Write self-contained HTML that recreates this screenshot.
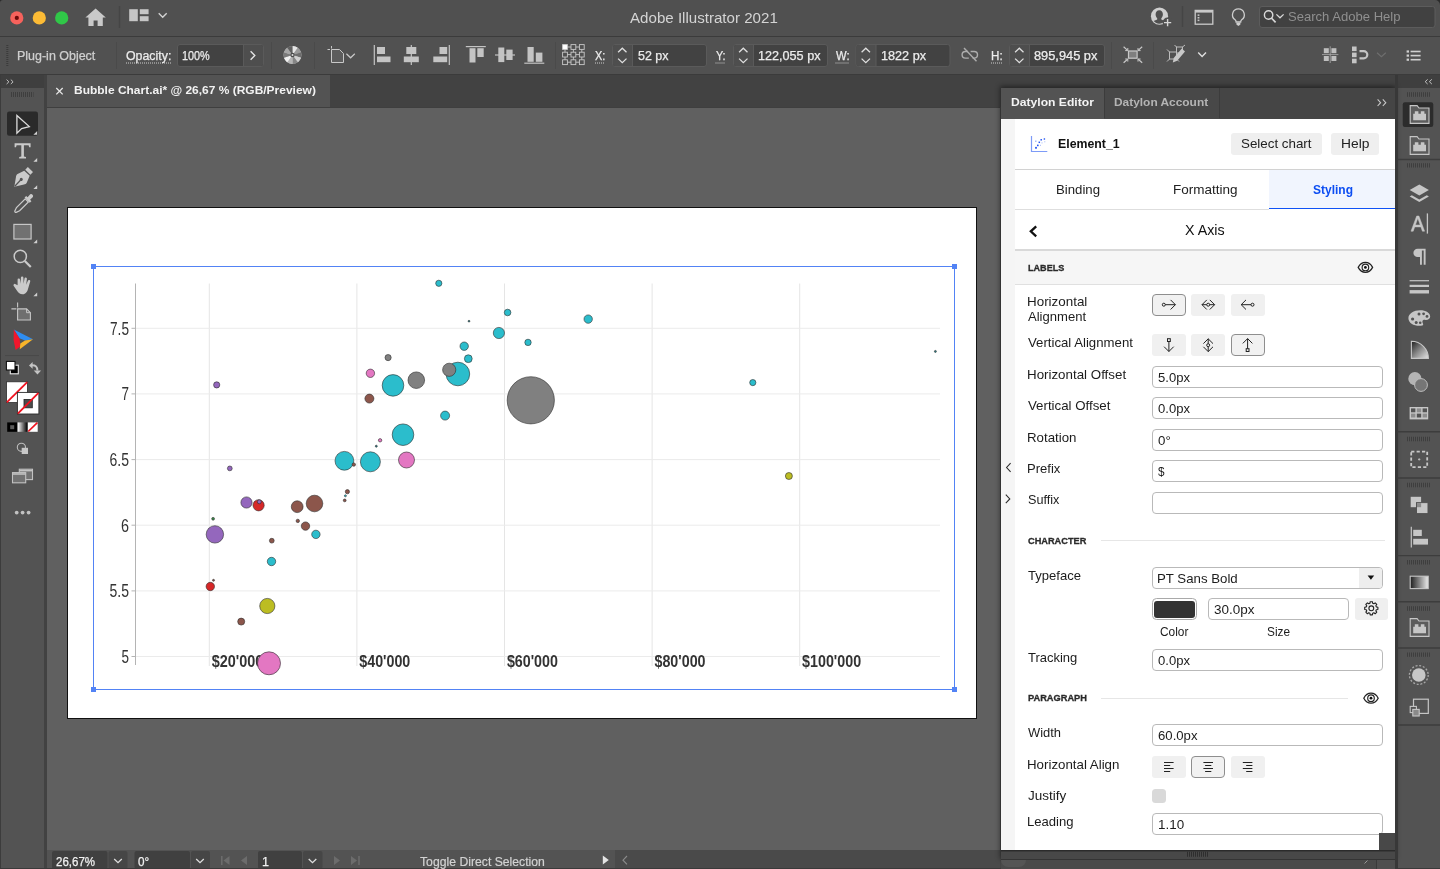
<!DOCTYPE html>
<html lang="en">
<head>
<meta charset="utf-8">
<title>Adobe Illustrator 2021</title>
<style>
*{box-sizing:border-box;margin:0;padding:0}
html,body{width:1440px;height:869px;overflow:hidden;background:#535353;font-family:"Liberation Sans",sans-serif;color:#ddd;font-size:12px}
.abs,.abs *{position:absolute}
.abs{left:0;top:0;width:1440px;height:869px;overflow:hidden;will-change:transform}
.t{white-space:nowrap;line-height:1;transform-origin:0 50%}
svg{overflow:visible}
/* ---------- app chrome ---------- */
#titlebar{left:0;top:0;width:1440px;height:36px;background:#505050}
#tl-sep{left:0;top:36px;width:1440px;height:1px;background:#3b3b3b}
#ctrlbar{left:0;top:37px;width:1440px;height:37px;background:#515151}
#cb-sep{left:0;top:74px;width:1440px;height:1px;background:#3b3b3b}
#tabbar{left:47px;top:75px;width:1349px;height:32px;background:#424242}
#doctab{left:47px;top:75px;width:283px;height:32px;background:#535353}
#tab-sep{left:47px;top:107px;width:953px;height:1px;background:#3f3f3f}
#canvas{left:47px;top:108px;width:953px;height:742px;background:#606060}
#lt-head{left:0;top:75px;width:44px;height:13px;background:#3f3f3f}
#lefttools{left:0;top:88px;width:44px;height:781px;background:#535353}
#lt-gap{left:44px;top:75px;width:3px;height:794px;background:#424242}
#statusbar{left:47px;top:850px;width:953px;height:19px;background:#535353}
#rightgap{left:1000px;top:107px;width:440px;height:762px;background:#454545}
#dock{left:1398px;top:88px;width:42px;height:781px;background:#535353}
#dock-head{left:1398px;top:75px;width:42px;height:13px;background:#3f3f3f}
/* inputs in control bar */
.cin{height:23px;top:44px;background:#404040;border:1px solid #383838;border-radius:2px}
.ctext{color:#e6e6e6;font-size:12.5px}
.vsep{width:1px;background:#474747}
/* artboard */
#artshadow{left:67px;top:207px;width:910px;height:512px;background:#111}
#artboard{left:68px;top:208px;width:908px;height:510px;background:#fff}
/* ---------- Datylon panel ---------- */
#pnl{left:1001px;top:88px;width:394px;height:771px;background:#3a3a3a;box-shadow:0 -1px 5px 1px rgba(0,0,0,.45)}
#pnl-tabs{left:1001px;top:88px;width:394px;height:30.600px;background:#454545}
#pnl-tab1{left:1001px;top:88px;width:103px;height:30.600px;background:#535353}
#pnl-tab2{left:1105px;top:88px;width:114px;height:30.600px;background:#484848}
#pnl-body{left:1001px;top:118.600px;width:394px;height:731.400px;background:#fff}
#pnl-gutter{left:1001px;top:118.600px;width:13.600px;height:731.400px;background:#f5f5f5}
.pl{color:#222;font-size:14px}
.pin{left:1152px;width:231px;height:22px;background:#fff;border:1px solid #b9b9b9;border-radius:4px}
.pbtn{width:34px;height:22px;background:#f0f0f0;border-radius:3px}
.pbtn.sel{border:1.200px solid #8e8e8e;background:#f1f1f1;border-radius:4px}
.gbtn{background:#efefef;border-radius:3px;height:22px}
#tt-title{left:630.0px !important;transform:scaleX(1.079)}
#tt-search{left:1288.0px !important;transform:scaleX(1.004)}
#c-plug{left:17.0px !important;transform:scaleX(1.039)}
#c-op{left:126.0px !important;transform:scaleX(1.030)}
#c-opv{left:182.0px !important;transform:scaleX(0.903)}
#c-x{left:595.0px !important;transform:scaleX(0.909)}
#c-xv{left:637.5px !important;transform:scaleX(1.039)}
#c-y{left:715.7px !important;transform:scaleX(0.899)}
#c-yv{left:758.0px !important;transform:scaleX(1.052)}
#c-w{left:835.5px !important;transform:scaleX(0.936)}
#c-wv{left:880.7px !important;transform:scaleX(1.054)}
#c-h{left:991.2px !important;transform:scaleX(0.969)}
#c-hv{left:1034.2px !important;transform:scaleX(1.066)}
#doc-title{left:74.0px !important;transform:scaleX(1.041)}
#st-zoom{left:55.5px !important;transform:scaleX(0.922)}
#st-rot{left:137.5px !important;transform:scaleX(0.937)}
#st-msg{left:420.0px !important;transform:scaleX(0.977)}
#p-tab1{left:1011.2px !important;transform:scaleX(1.055)}
#p-tab2{left:1114.0px !important;transform:scaleX(1.035)}
#p-el{left:1057.8px !important;transform:scaleX(0.948)}
#p-sel{left:1241.0px !important;transform:scaleX(1.027)}
#p-help{left:1340.8px !important;transform:scaleX(1.062)}
#p-bind{left:1055.9px !important;transform:scaleX(1.016)}
#p-fmt{left:1172.7px !important;transform:scaleX(1.038)}
#p-sty{left:1312.5px !important;transform:scaleX(0.922)}
#p-xaxis{left:1185.3px !important;transform:scaleX(0.952)}
#p-labels{left:1028.4px !important;transform:scaleX(0.956)}
#p-ha1{left:1027.4px !important;transform:scaleX(1.031)}
#p-ha2{left:1028.4px !important;transform:scaleX(1.005)}
#p-va{left:1028.4px !important;transform:scaleX(1.015)}
#p-ho{left:1027.4px !important;transform:scaleX(1.026)}
#p-vo{left:1028.4px !important;transform:scaleX(1.021)}
#p-rot{left:1027.4px !important;transform:scaleX(1.021)}
#p-pre{left:1027.4px !important;transform:scaleX(1.002)}
#p-suf{left:1028.4px !important;transform:scaleX(0.973)}
#p-char{left:1028.4px !important;transform:scaleX(0.970)}
#p-tf{left:1028.4px !important;transform:scaleX(1.005)}
#p-col{left:1160.0px !important;transform:scaleX(0.914)}
#p-size{left:1267.2px !important;transform:scaleX(0.910)}
#p-tr{left:1028.4px !important;transform:scaleX(0.999)}
#p-para{left:1028.4px !important;transform:scaleX(0.974)}
#p-w{left:1028.4px !important;transform:scaleX(0.994)}
#p-hal{left:1027.4px !important;transform:scaleX(1.023)}
#p-just{left:1028.4px !important;transform:scaleX(1.039)}
#p-lead{left:1027.4px !important;transform:scaleX(1.006)}
#v-ho{left:1157.8px !important;transform:scaleX(1.006)}
#v-vo{left:1157.8px !important;transform:scaleX(1.006)}
#v-rot{left:1157.8px !important;transform:scaleX(1.022)}
#v-pre{left:1157.8px !important;transform:scaleX(0.900)}
#v-tf{left:1156.8px !important;transform:scaleX(1.018)}
#v-size{left:1213.7px !important;transform:scaleX(1.037)}
#v-tr{left:1157.8px !important;transform:scaleX(1.006)}
#v-w{left:1157.8px !important;transform:scaleX(1.012)}
#v-lead{left:1157.8px !important;transform:scaleX(1.033)}
</style>
</head>
<body>
<div class="abs" id="root">

<!-- ===== base chrome ===== -->
<div id="titlebar"></div><div id="tl-sep"></div>
<div id="ctrlbar"></div><div id="cb-sep"></div>
<div id="rightgap"></div>
<div id="tabbar"></div><div id="doctab"></div><div id="tab-sep"></div>
<div id="canvas"></div>
<div id="lt-head"></div><div id="lefttools"></div><div id="lt-gap"></div>
<div id="statusbar"></div>
<div id="dock-head"></div><div id="dock"></div>

<!-- ===== artboard ===== -->
<div id="artshadow"></div><div id="artboard"></div>
<svg id="chart" style="left:0;top:0" width="1440" height="869" viewBox="0 0 1440 869">
<g stroke="#ebebeb" stroke-width="1" fill="none">
<path d="M209.3 283.5V666" stroke="#e5e5e5"/>
<path d="M356.9 283.5V666" stroke="#e5e5e5"/>
<path d="M504.5 283.5V666" stroke="#e5e5e5"/>
<path d="M652.1 283.5V666" stroke="#e5e5e5"/>
<path d="M799.7 283.5V666" stroke="#e5e5e5"/>
<path d="M135.5 328.3H940"/>
<path d="M135.5 393.9H940"/>
<path d="M135.5 459.6H940"/>
<path d="M135.5 525.2H940"/>
<path d="M135.5 590.9H940"/>
<path d="M135.5 656.5H940"/>
</g>
<g stroke="#b4b4b4" stroke-width="1" fill="none"><path d="M135.5 283.5V665"/>
<path d="M131.5 328.3H135.5"/>
<path d="M131.5 393.9H135.5"/>
<path d="M131.5 459.6H135.5"/>
<path d="M131.5 525.2H135.5"/>
<path d="M131.5 590.9H135.5"/>
<path d="M131.5 656.5H135.5"/>
</g>
<g font-family="Liberation Sans, sans-serif" font-size="16" font-weight="bold" fill="#333">
<text x="211.7" y="667.3" textLength="51.5" lengthAdjust="spacingAndGlyphs">$20'000</text>
<text x="359.3" y="667.3" textLength="51" lengthAdjust="spacingAndGlyphs">$40'000</text>
<text x="506.9" y="667.3" textLength="51" lengthAdjust="spacingAndGlyphs">$60'000</text>
<text x="654.5" y="667.3" textLength="51" lengthAdjust="spacingAndGlyphs">$80'000</text>
<text x="802.1" y="667.3" textLength="59" lengthAdjust="spacingAndGlyphs">$100'000</text>
</g>
<g stroke="#2e2e2e" stroke-width="0.6">
<circle cx="438.8" cy="283.3" r="3.1" fill="#2bbdcc"/>
<circle cx="507.6" cy="312.5" r="3.3" fill="#2bbdcc"/>
<circle cx="469.0" cy="321.2" r="0.9" fill="#2a7f88"/>
<circle cx="498.9" cy="333.0" r="5.6" fill="#2bbdcc"/>
<circle cx="528.0" cy="342.4" r="3.2" fill="#2bbdcc"/>
<circle cx="464.2" cy="346.2" r="4.2" fill="#2bbdcc"/>
<circle cx="468.3" cy="358.7" r="3.9" fill="#2bbdcc"/>
<circle cx="388.1" cy="357.6" r="3.1" fill="#808080"/>
<circle cx="370.4" cy="373.3" r="4.2" fill="#e377c2"/>
<circle cx="393.0" cy="385.4" r="10.8" fill="#2bbdcc"/>
<circle cx="416.3" cy="380.2" r="8.3" fill="#808080"/>
<circle cx="457.9" cy="374.0" r="11.8" fill="#2bbdcc"/>
<circle cx="449.2" cy="369.8" r="6.6" fill="#808080"/>
<circle cx="369.4" cy="398.6" r="4.5" fill="#8c564b"/>
<circle cx="530.8" cy="400.3" r="23.6" fill="#808080"/>
<circle cx="216.7" cy="384.9" r="3.1" fill="#9467bd"/>
<circle cx="445.1" cy="415.6" r="4.5" fill="#2bbdcc"/>
<circle cx="403.0" cy="434.7" r="10.8" fill="#2bbdcc"/>
<circle cx="380.1" cy="440.3" r="1.7" fill="#e377c2"/>
<circle cx="376.3" cy="446.2" r="1.0" fill="#2a7f88"/>
<circle cx="344.4" cy="460.8" r="9.4" fill="#2bbdcc"/>
<circle cx="353.8" cy="464.6" r="1.7" fill="#8c564b"/>
<circle cx="370.4" cy="461.8" r="10" fill="#2bbdcc"/>
<circle cx="406.5" cy="460.0" r="8" fill="#e377c2"/>
<circle cx="229.8" cy="468.4" r="2.4" fill="#9467bd"/>
<circle cx="347.4" cy="491.7" r="2.1" fill="#8c564b"/>
<circle cx="345.4" cy="495.8" r="1.0" fill="#2bbdcc"/>
<circle cx="344.7" cy="500.4" r="1.4" fill="#8c564b"/>
<circle cx="246.5" cy="502.5" r="5.6" fill="#9467bd"/>
<circle cx="258.6" cy="505.3" r="5.6" fill="#d62728"/>
<circle cx="259.3" cy="501.8" r="2.0" fill="#9467bd"/>
<circle cx="297.2" cy="506.7" r="5.9" fill="#8c564b"/>
<circle cx="314.5" cy="503.5" r="8.3" fill="#8c564b"/>
<circle cx="213.1" cy="518.8" r="1.4" fill="#3a8a4a"/>
<circle cx="297.8" cy="520.9" r="1.7" fill="#8c564b"/>
<circle cx="305.5" cy="526.1" r="4.2" fill="#8c564b"/>
<circle cx="214.9" cy="534.4" r="8.7" fill="#9467bd"/>
<circle cx="315.9" cy="534.4" r="4.2" fill="#2bbdcc"/>
<circle cx="271.8" cy="540.7" r="2.4" fill="#8c564b"/>
<circle cx="271.5" cy="561.5" r="4.2" fill="#2bbdcc"/>
<circle cx="213.5" cy="580.3" r="1.0" fill="#8c564b"/>
<circle cx="210.3" cy="586.5" r="4.2" fill="#d62728"/>
<circle cx="267.3" cy="606.0" r="7.6" fill="#bcbd22"/>
<circle cx="241.2" cy="621.6" r="3.5" fill="#8c564b"/>
<circle cx="269.0" cy="663.3" r="11.5" fill="#e377c2"/>
<circle cx="588.2" cy="319.1" r="4.2" fill="#2bbdcc"/>
<circle cx="752.8" cy="382.6" r="3.1" fill="#2bbdcc"/>
<circle cx="935.4" cy="351.4" r="1.0" fill="#2a7f88"/>
<circle cx="788.9" cy="476.0" r="3.5" fill="#bcbd22"/>
</g>
<g font-family="Liberation Sans, sans-serif" font-size="18" fill="#333" text-anchor="end">
<text x="129" y="334.5" textLength="19" lengthAdjust="spacingAndGlyphs">7.5</text>
<text x="129" y="400.1" textLength="7.5" lengthAdjust="spacingAndGlyphs">7</text>
<text x="129" y="465.8" textLength="19.5" lengthAdjust="spacingAndGlyphs">6.5</text>
<text x="129" y="531.5" textLength="8" lengthAdjust="spacingAndGlyphs">6</text>
<text x="129" y="597.1" textLength="19.5" lengthAdjust="spacingAndGlyphs">5.5</text>
<text x="129" y="662.8" textLength="7.5" lengthAdjust="spacingAndGlyphs">5</text>
</g>
<g fill="none" stroke="#5283f5" stroke-width="1"><rect x="93.5" y="266.5" width="861" height="423"/></g>
<g fill="#5283f5">
<rect x="91.0" y="264.0" width="5" height="5"/>
<rect x="952.0" y="264.0" width="5" height="5"/>
<rect x="91.0" y="687.0" width="5" height="5"/>
<rect x="952.0" y="687.0" width="5" height="5"/>
</g>
</svg>

<!-- ===== title bar ===== -->
<svg style="left:0;top:0" width="1440" height="37" viewBox="0 0 1440 37">
<circle cx="16.8" cy="17.9" r="6.6" fill="#f6625c"/><circle cx="16.8" cy="17.9" r="2.1" fill="#6b0a0a"/>
<circle cx="39.3" cy="17.9" r="6.6" fill="#fcbb35"/>
<circle cx="61.7" cy="17.9" r="6.6" fill="#30c748"/>
<!-- home -->
<path d="M95.6 8.4 L85.4 17.6 H88.4 V25.9 H93.6 V20.4 H97.6 V25.9 H102.8 V17.6 H105.8 Z" fill="#c9c9c9"/>
<path d="M119.5 6V28" stroke="#454545" stroke-width="1.4"/>
<!-- workspace layout -->
<g fill="#c6c6c6"><rect x="129.2" y="9.2" width="8.6" height="12"/><rect x="139.8" y="9.2" width="8.8" height="5"/><rect x="139.8" y="16.2" width="8.8" height="5"/></g>
<path d="M158.7 13.3 L162.7 17.2 L166.7 13.3" fill="none" stroke="#d2d2d2" stroke-width="1.4"/>
<!-- user+ -->
<circle cx="1159.5" cy="16.2" r="8.6" fill="#cfcfcf"/>
<path d="M1159.3 10.2c2.3 0 3.6 1.8 3.6 4.1 0 1.7-.7 3.2-1.6 3.9v1.2l3.4 1.7c-1.3 1.6-3.3 2.6-5.5 2.6s-4.2-1-5.5-2.6l3.5-1.7v-1.2c-.9-.7-1.6-2.2-1.6-3.9 0-2.3 1.4-4.1 3.7-4.1z" fill="#505050"/>
<circle cx="1167.6" cy="22.6" r="5" fill="#505050"/>
<path d="M1164 22.6h7.2M1167.6 19v7.2" stroke="#d6d6d6" stroke-width="1.4"/>
<path d="M1182.5 6V27" stroke="#454545" stroke-width="1.4"/>
<!-- panel icon -->
<rect x="1195.2" y="10.4" width="17.6" height="13.8" fill="none" stroke="#c9c9c9" stroke-width="1.3"/>
<rect x="1195.2" y="10.4" width="17.6" height="2.2" fill="#c9c9c9"/>
<g fill="#c9c9c9"><rect x="1197.6" y="14.4" width="1.8" height="1.5"/><rect x="1197.6" y="17" width="1.8" height="1.5"/><rect x="1197.6" y="19.6" width="1.8" height="1.5"/></g>
<!-- bulb -->
<path d="M1238.4 8.9a5.9 5.9 0 0 1 3.3 10.8c-.7.6-1 1.4-1 2.3h-4.6c0-.9-.3-1.7-1-2.3a5.9 5.9 0 0 1 3.3-10.8z" fill="none" stroke="#cdcdcd" stroke-width="1.3"/>
<path d="M1236.4 22.8h4v1.6l-2 1.5-2-1.5z" fill="#cdcdcd"/>
<!-- search -->
<rect x="1259.5" y="6.5" width="175.5" height="21" rx="2.5" fill="#414141" stroke="#5c5c5c" stroke-width="1"/>
<circle cx="1268.6" cy="15" r="4.2" fill="none" stroke="#d8d8d8" stroke-width="1.4"/>
<path d="M1271.6 18.2l4 4.2" stroke="#d8d8d8" stroke-width="1.6"/>
<path d="M1276.4 14.4l3.6 3.4 3.6-3.4" fill="none" stroke="#d8d8d8" stroke-width="1.3"/>
<!-- window corners -->
<path d="M0 0h3a3 3 0 0 0-3 3z" fill="#2b2b2b"/><path d="M1440 0h-5a5 5 0 0 1 5 5z" fill="#2b2b2b"/>
</svg>
<div class="t" id="tt-title" style="left:630px;top:11px;font-size:14px;color:#d4d4d4">Adobe Illustrator 2021</div>
<div class="t" id="tt-search" style="left:1288px;top:9.5px;font-size:13px;color:#8f8f8f">Search Adobe Help</div>


<!-- ===== control bar ===== -->
<svg style="left:0;top:37px" width="1440" height="38" viewBox="0 37 1440 38">
<path d="M7.300 45V67" stroke="#3b3b3b" stroke-width="2" stroke-dasharray="1 1"/>
<path d="M116.5 42V69" stroke="#4a4a4a" stroke-width="1"/>
<path d="M271.5 42V69" stroke="#4a4a4a" stroke-width="1"/>
<path d="M314.5 42V69" stroke="#4a4a4a" stroke-width="1"/>
<path d="M555.5 42V69" stroke="#4a4a4a" stroke-width="1"/>
<path d="M1111.5 42V69" stroke="#4a4a4a" stroke-width="1"/>
<path d="M1153.5 42V69" stroke="#4a4a4a" stroke-width="1"/>
<rect x="177.5" y="44.5" width="86" height="22" rx="2.5" fill="#424242" stroke="#5a5a5a" stroke-width="1"/>
<path d="M261 45H243.5V66H261a2 2 0 0 0 2-2V47a2 2 0 0 0-2-2z" fill="#4e4e4e"/>
<path d="M243.5 45V66" stroke="#5a5a5a" stroke-width="1"/>
<path d="M250.6 51.2l4.2 4.3-4.2 4.3" fill="none" stroke="#e4e4e4" stroke-width="1.4"/>
<rect x="612.5" y="44.5" width="94" height="22" rx="2.5" fill="#424242" stroke="#5a5a5a" stroke-width="1"/>
<path d="M615 45H632.5V66H615a2 2 0 0 1-2-2V47a2 2 0 0 1 2-2z" fill="#4e4e4e"/>
<path d="M632.5 45V66" stroke="#5a5a5a" stroke-width="1"/>
<path d="M618.0999999999999 52.2l4.2-4 4.2 4M618.0999999999999 58.6l4.2 4 4.2-4" fill="none" stroke="#e0e0e0" stroke-width="1.3"/>
<rect x="733.5" y="44.5" width="94" height="22" rx="2.5" fill="#424242" stroke="#5a5a5a" stroke-width="1"/>
<path d="M736 45H753.5V66H736a2 2 0 0 1-2-2V47a2 2 0 0 1 2-2z" fill="#4e4e4e"/>
<path d="M753.5 45V66" stroke="#5a5a5a" stroke-width="1"/>
<path d="M739.0999999999999 52.2l4.2-4 4.2 4M739.0999999999999 58.6l4.2 4 4.2-4" fill="none" stroke="#e0e0e0" stroke-width="1.3"/>
<rect x="856.0" y="44.5" width="94.0" height="22" rx="2.5" fill="#424242" stroke="#5a5a5a" stroke-width="1"/>
<path d="M858.5 45H876.0V66H858.5a2 2 0 0 1-2-2V47a2 2 0 0 1 2-2z" fill="#4e4e4e"/>
<path d="M876.0 45V66" stroke="#5a5a5a" stroke-width="1"/>
<path d="M861.5999999999999 52.2l4.2-4 4.2 4M861.5999999999999 58.6l4.2 4 4.2-4" fill="none" stroke="#e0e0e0" stroke-width="1.3"/>
<rect x="1009.5" y="44.5" width="95" height="22" rx="2.5" fill="#424242" stroke="#5a5a5a" stroke-width="1"/>
<path d="M1012 45H1029.5V66H1012a2 2 0 0 1-2-2V47a2 2 0 0 1 2-2z" fill="#4e4e4e"/>
<path d="M1029.5 45V66" stroke="#5a5a5a" stroke-width="1"/>
<path d="M1015.0999999999999 52.2l4.2-4 4.2 4M1015.0999999999999 58.6l4.2 4 4.2-4" fill="none" stroke="#e0e0e0" stroke-width="1.3"/>
<path d="M126 63H171" stroke="#cfcfcf" stroke-width="1" stroke-dasharray="1 1"/>
<path d="M595 63H605" stroke="#cfcfcf" stroke-width="1" stroke-dasharray="1 1"/>
<path d="M715.5 63H725" stroke="#cfcfcf" stroke-width="1" stroke-dasharray="1 1"/>
<path d="M835.5 63H849" stroke="#cfcfcf" stroke-width="1" stroke-dasharray="1 1"/>
<path d="M991 63H1002.5" stroke="#cfcfcf" stroke-width="1" stroke-dasharray="1 1"/>
<circle cx="292.5" cy="55" r="9" fill="#bdbdbd"/>
<path d="M292.5 55L292.50 46.00A9 9 0 0 1 297.79 47.72Z" fill="#e6e6e6"/>
<path d="M292.5 55L297.79 47.72A9 9 0 0 1 301.06 52.22Z" fill="#9a9a9a"/>
<path d="M292.5 55L301.06 52.22A9 9 0 0 1 301.06 57.78Z" fill="#6e6e6e"/>
<path d="M292.5 55L301.06 57.78A9 9 0 0 1 297.79 62.28Z" fill="#d0d0d0"/>
<path d="M292.5 55L297.79 62.28A9 9 0 0 1 292.50 64.00Z" fill="#858585"/>
<path d="M292.5 55L292.50 64.00A9 9 0 0 1 287.21 62.28Z" fill="#b5b5b5"/>
<path d="M292.5 55L287.21 62.28A9 9 0 0 1 283.94 57.78Z" fill="#f0f0f0"/>
<path d="M292.5 55L283.94 57.78A9 9 0 0 1 283.94 52.22Z" fill="#7a7a7a"/>
<path d="M292.5 55L283.94 52.22A9 9 0 0 1 287.21 47.72Z" fill="#a6a6a6"/>
<path d="M292.5 55L287.21 47.72A9 9 0 0 1 292.50 46.00Z" fill="#5f5f5f"/>
<circle cx="292.5" cy="55" r="2.2" fill="#4a4a4a"/><circle cx="292.5" cy="55" r="1" fill="#ddd"/>
<path d="M331.5 49.5H339.5L343.5 53.5V62.5H331.5Z" fill="#5c5c5c" stroke="#c8c8c8" stroke-width="1"/>
<path d="M327.5 49.5H330M331.5 46V48.5" stroke="#c8c8c8" stroke-width="1"/>
<path d="M346.4 53.8l4.2 4 4.2-4" fill="none" stroke="#c8c8c8" stroke-width="1.2"/>
<path d="M374.3 45V65" stroke="#c4c4c4" stroke-width="1.2"/><rect x="377" y="47" width="8" height="7" fill="#c4c4c4"/><rect x="377" y="56.5" width="13.5" height="5.7" fill="#c4c4c4"/>
<path d="M411.3 45V65" stroke="#c4c4c4" stroke-width="1.2"/><rect x="406.3" y="47" width="10" height="7" fill="#c4c4c4"/><rect x="403.8" y="56.5" width="15" height="5.7" fill="#c4c4c4"/>
<path d="M449.3 45V65" stroke="#c4c4c4" stroke-width="1.2"/><rect x="439.5" y="47" width="7.7" height="7" fill="#c4c4c4"/><rect x="433.3" y="56.5" width="13.9" height="5.7" fill="#c4c4c4"/>
<path d="M465.8 46.6H485.8" stroke="#c4c4c4" stroke-width="1.2"/><rect x="469.5" y="48.2" width="6" height="14.3" fill="#c4c4c4"/><rect x="477.3" y="48.2" width="6.4" height="8.8" fill="#c4c4c4"/>
<path d="M495 55H515" stroke="#c4c4c4" stroke-width="1.2"/><rect x="498.3" y="47.5" width="6" height="14.6" fill="#c4c4c4"/><rect x="506.3" y="49.6" width="6.3" height="10.4" fill="#c4c4c4"/>
<path d="M524.3 63.2H544.3" stroke="#c4c4c4" stroke-width="1.2"/><rect x="527.5" y="47" width="6.2" height="14.8" fill="#c4c4c4"/><rect x="535.8" y="52.6" width="6.6" height="9.2" fill="#c4c4c4"/>
<path d="M565 47H581.8M565 54.6H581.8M565 62.2H581.8M565 47V62.2M573.4 47V62.2M581.8 47V62.2" stroke="#c8c8c8" stroke-width="0.9" fill="none"/>
<rect x="562.6" y="44.6" width="4.8" height="4.8" fill="#fff" stroke="#c8c8c8" stroke-width="0.9"/>
<rect x="562.6" y="52.2" width="4.8" height="4.8" fill="#515151" stroke="#c8c8c8" stroke-width="0.9"/>
<rect x="562.6" y="59.800000000000004" width="4.8" height="4.8" fill="#515151" stroke="#c8c8c8" stroke-width="0.9"/>
<rect x="571.0" y="44.6" width="4.8" height="4.8" fill="#515151" stroke="#c8c8c8" stroke-width="0.9"/>
<rect x="571.0" y="52.2" width="4.8" height="4.8" fill="#515151" stroke="#c8c8c8" stroke-width="0.9"/>
<rect x="571.0" y="59.800000000000004" width="4.8" height="4.8" fill="#515151" stroke="#c8c8c8" stroke-width="0.9"/>
<rect x="579.4" y="44.6" width="4.8" height="4.8" fill="#515151" stroke="#c8c8c8" stroke-width="0.9"/>
<rect x="579.4" y="52.2" width="4.8" height="4.8" fill="#515151" stroke="#c8c8c8" stroke-width="0.9"/>
<rect x="579.4" y="59.800000000000004" width="4.8" height="4.8" fill="#515151" stroke="#c8c8c8" stroke-width="0.9"/>
<g fill="none" stroke="#adadad" stroke-width="1.4"><path d="M968 51.5h-2.6a3.3 3.3 0 0 0 0 6.6h3.4M970.6 51.5h3.6a3.3 3.3 0 0 1 0 6.6h-1.6"/><path d="M964 48l12.5 13.2"/></g>
<g stroke="#c8c8c8" stroke-width="1.2" fill="none"><rect x="1128.5" y="51" width="8.6" height="7.2" fill="#7f7f7f"/><path d="M1123.6 46.8l4 3.6M1142.2 46.8l-4 3.6M1123.6 62.8l4-3.6M1142.2 62.8l-4-3.6"/><path d="M1125.2 50.6h2.6v-2.6M1140.6 50.6h-2.6v-2.6M1125.2 59h2.6v2.6M1140.6 59h-2.6v2.6" stroke-width="1"/></g>
<g stroke="#bdbdbd" stroke-width="1" fill="none"><rect x="1169.5" y="52" width="7" height="7"/><rect x="1176.5" y="47" width="6" height="6"/><path d="M1167 49.5l2.5 2.5M1167 61.5l2.5-2.5M1179 61.5l-2.5-2.5M1174.5 45l2 2M1185 45l-2.5 2"/></g>
<path d="M1181.8 48.6l3.2 2.8-7.8 9.4-4.4 1.8.9-4.6z" fill="#c8c8c8"/>
<path d="M1198.2 52.6l3.9 3.8 3.9-3.8" fill="none" stroke="#e0e0e0" stroke-width="1.4"/>
<g fill="#bfbfbf"><rect x="1323.8" y="48.2" width="5" height="5"/><rect x="1331.4" y="48.2" width="5" height="5"/><rect x="1323.8" y="56" width="5" height="5"/><rect x="1331.4" y="56" width="5" height="5"/></g>
<path d="M1330.2 46.3V63M1322 54.6H1338.4" stroke="#a5a5a5" stroke-width="0.9"/>
<g fill="#c4c4c4"><rect x="1352" y="46.5" width="4.6" height="4.6"/><rect x="1352" y="52.6" width="4.6" height="4.6"/><rect x="1352" y="58.7" width="4.6" height="4.6"/></g>
<path d="M1359.5 51.2h4.2a3.6 3.6 0 0 1 0 7.2h-4.2" fill="none" stroke="#c4c4c4" stroke-width="2.2"/>
<path d="M1377 52.8l4.4 4 4.4-4" fill="none" stroke="#6e6e6e" stroke-width="1.2"/>
<g fill="#cfcfcf"><rect x="1406.6" y="50.4" width="2.4" height="2.2"/><rect x="1406.6" y="54.5" width="2.4" height="2.2"/><rect x="1406.6" y="58.6" width="2.4" height="2.2"/><rect x="1410.6" y="50.7" width="10" height="1.6"/><rect x="1410.6" y="54.8" width="10" height="1.6"/><rect x="1410.6" y="58.9" width="10" height="1.6"/></g>
</svg>
<div class="t" id="c-plug" style="left:17px;top:50px;font-size:12px;color:#cfcfcf;-webkit-text-stroke:0.25px #cfcfcf;">Plug-in Object</div>
<div class="t" id="c-op" style="left:126px;top:50px;font-size:12px;color:#ececec;-webkit-text-stroke:0.25px #ececec;">Opacity:</div>
<div class="t" id="c-opv" style="left:182px;top:50px;font-size:12px;color:#ececec;-webkit-text-stroke:0.25px #ececec;">100%</div>
<div class="t" id="c-x" style="left:595px;top:50px;font-size:12px;color:#ececec;-webkit-text-stroke:0.25px #ececec;">X:</div>
<div class="t" id="c-xv" style="left:637.5px;top:50px;font-size:12px;color:#ececec;-webkit-text-stroke:0.25px #ececec;">52 px</div>
<div class="t" id="c-y" style="left:715.5px;top:50px;font-size:12px;color:#ececec;-webkit-text-stroke:0.25px #ececec;">Y:</div>
<div class="t" id="c-yv" style="left:758px;top:50px;font-size:12px;color:#ececec;-webkit-text-stroke:0.25px #ececec;">122,055 px</div>
<div class="t" id="c-w" style="left:835.5px;top:50px;font-size:12px;color:#ececec;-webkit-text-stroke:0.25px #ececec;">W:</div>
<div class="t" id="c-wv" style="left:880.5px;top:50px;font-size:12px;color:#ececec;-webkit-text-stroke:0.25px #ececec;">1822 px</div>
<div class="t" id="c-h" style="left:991px;top:50px;font-size:12px;color:#ececec;-webkit-text-stroke:0.25px #ececec;">H:</div>
<div class="t" id="c-hv" style="left:1034.2px;top:50px;font-size:12px;color:#ececec;-webkit-text-stroke:0.25px #ececec;">895,945 px</div>

<!-- ===== doc tab + left tools ===== -->
<div style="left:0;top:75px;width:1px;height:794px;background:#3c3c3c"></div>
<svg style="left:0;top:75px" width="1000" height="794" viewBox="0 75 1000 794">
<!-- header chevrons + gripper -->
<path d="M6.6 79.6l2.3 2.2-2.3 2.2M10.8 79.6l2.3 2.2-2.3 2.2" fill="none" stroke="#c4c4c4" stroke-width="1"/>
<path d="M11 94.5H33.5" stroke="#3e3e3e" stroke-width="5" stroke-dasharray="1 1"/>
<!-- doc tab close + -->
<path d="M56.300 88l6.400 6.400M62.700 88l-6.400 6.400" stroke="#e8e8e8" stroke-width="1.3"/>
<!-- selection tool -->
<rect x="7" y="111.5" width="31" height="24.2" rx="2.2" fill="#2a2a2a"/>
<path d="M16.9 115.4V133.2L21.6 128.6L29.3 126.6Z" fill="none" stroke="#dcdcdc" stroke-width="1.3" stroke-linejoin="miter"/>
<g fill="#d0d0d0">
<path d="M37.200 131V134.800H33.400Z"/><path d="M37.200 158V161.800H33.400Z"/><path d="M37.200 185.200V189H33.400Z"/><path d="M37.200 239.400V243.200H33.400Z"/><path d="M37.200 292.400V296.200H33.400Z"/>
</g>
<!-- type tool -->
<path d="M14.6 143.3H30.6V147.2H29.2L28.6 145.3H23.9V156.5L26 157V158.5H19.2V157L21.3 156.5V145.3H16.6L16 147.2H14.6Z" fill="#cacaca"/>
<!-- pen tool -->
<g transform="translate(22.300 178.200) rotate(43) scale(1.1)">
<path d="M-3.2 -10.8h6.4v3.4h-6.4z" fill="#cacaca"/>
<path d="M-3.4 -6.2h6.8l2.3 6.4c.3 1-.1 2-.7 2.9L0 10.6l-5-7.5c-.6-.9-1-1.9-.7-2.9z" fill="#cacaca"/>
<path d="M0 10V2.2" stroke="#535353" stroke-width="1.1"/><circle cx="0" cy="1.4" r="1.4" fill="#535353"/>
</g>
<!-- eyedropper -->
<g transform="translate(22.200 205) rotate(45) scale(1.05)">
<path d="M-1.8 -12.6a1.9 1.9 0 0 1 3.6 0v3.8h1.8v2.2h-7v-2.2h1.8z" fill="#cacaca"/>
<path d="M-2.1 -6.2h4.2v11.8l-1.2 3.4a1 1 0 0 1-1.8 0l-1.2-3.4z" fill="none" stroke="#cacaca" stroke-width="1.2"/>
</g>
<!-- rectangle -->
<rect x="13.9" y="224.4" width="17.2" height="14.6" fill="#717171" stroke="#c6c6c6" stroke-width="1.2"/>
<!-- zoom -->
<circle cx="20.3" cy="256.4" r="6.1" fill="none" stroke="#cacaca" stroke-width="1.5"/>
<path d="M24.8 261l6 6" stroke="#cacaca" stroke-width="2.2"/>
<!-- hand -->
<path d="M17.6 285.2v-5.4a1.2 1.2 0 0 1 2.4-.2l.6 4.2.3-6a1.2 1.2 0 0 1 2.5 0l.2 6 .9-5.3a1.2 1.2 0 0 1 2.4.4l-.7 5.8 1.7-3.9a1.2 1.2 0 0 1 2.3.8l-2.200 7.400c-.7 2.500-2.200 5.300-5.400 5.300-2.800 0-4.100-1.300-5.400-3.200l-3.600-5.300a1.300 1.300 0 0 1 2-1.600z" fill="#cacaca"/>
<!-- artboard tool -->
<path d="M17.6 308.9H26.6L30.4 312.7V320H17.6Z" fill="#6f6f6f" stroke="#c6c6c6" stroke-width="1.1"/>
<path d="M26.6 308.9V312.7H30.4" fill="none" stroke="#c6c6c6" stroke-width="1"/>
<path d="M11.4 308.9H16.4M17.6 302.4V307.6" stroke="#c6c6c6" stroke-width="1.1"/>
<!-- datylon logo -->
<path d="M13.800 329.400L33 339.300L25 340.400L19.400 338.300Z" fill="#2f8df0"/>
<path d="M13.800 329.400L19.600 338.400L20.400 346.600L15.600 350L13.600 340Z" fill="#f0162c"/>
<path d="M33 339.300L19.800 349.200L20.300 343.600L25 340.400Z" fill="#f8b52a"/>
<path d="M5 355.6H39" stroke="#484848" stroke-width="1"/>
<!-- default fill/stroke -->
<rect x="10.300" y="365.200" width="8" height="8.600" fill="#000" stroke="#e8e8e8" stroke-width="1.1"/>
<rect x="12.600" y="367.600" width="3.400" height="3.800" fill="#000"/>
<rect x="6.400" y="361.400" width="8.600" height="8.600" fill="#fff" stroke="#111" stroke-width="1.1"/>
<!-- swap arrow -->
<path d="M31.400 365.200c4.200-.3 6 1.600 6 5.400" fill="none" stroke="#c4c4c4" stroke-width="2"/>
<path d="M29 365.400l3.600-3.300v6.600z" fill="#c4c4c4"/><path d="M37.500 374.400l-3.800-3.800h7.400z" fill="#c4c4c4"/>
<!-- fill -->
<rect x="6.500" y="381.800" width="21" height="20.800" fill="#fff" stroke="#2b2b2b" stroke-width="0.8"/>
<path d="M6.800 402.300L27.200 382.100" stroke="#f0121f" stroke-width="1.800"/>
<!-- stroke -->
<rect x="17.400" y="392.400" width="21.500" height="21.600" fill="#fff" stroke="#2b2b2b" stroke-width="0.9"/>
<rect x="24" y="399.400" width="8.300" height="8.400" fill="#4c4c4c" stroke="#222" stroke-width="0.8"/>
<path d="M17.800 413.600L38.500 392.800" stroke="#f0121f" stroke-width="1.800"/>
<!-- color modes -->
<defs><linearGradient id="gr1" x1="0" x2="1" y1="0" y2="0"><stop offset="0" stop-color="#fff"/><stop offset="1" stop-color="#000"/></linearGradient></defs>
<rect x="7.200" y="422.400" width="9.800" height="9.400" fill="#000"/><rect x="10.200" y="425.200" width="4" height="4" fill="#5a5a5a"/>
<rect x="17.700" y="422.400" width="9.600" height="9.400" fill="url(#gr1)"/>
<rect x="27.900" y="422.400" width="9.800" height="9.400" fill="#fff"/><path d="M28.200 431.500L37.400 422.700" stroke="#f0121f" stroke-width="1.700"/>
<!-- draw mode -->
<circle cx="21.400" cy="447.300" r="4.100" fill="none" stroke="#bdbdbd" stroke-width="1.100"/>
<rect x="21.700" y="447.800" width="6.300" height="6.200" fill="#c8c8c8"/>
<!-- screen mode -->
<rect x="19.300" y="469.200" width="13.200" height="10.400" fill="#727272" stroke="#c2c2c2" stroke-width="1.100"/><path d="M19.300 470.600H32.500" stroke="#c2c2c2" stroke-width="1.600"/>
<rect x="12.500" y="472.600" width="13.200" height="10.200" fill="#727272" stroke="#c2c2c2" stroke-width="1.100"/><path d="M12.500 474H25.700" stroke="#c2c2c2" stroke-width="1.600"/>
<!-- dots -->
<circle cx="16.700" cy="512.600" r="1.900" fill="#c2c2c2"/><circle cx="22.600" cy="512.600" r="1.900" fill="#c2c2c2"/><circle cx="28.600" cy="512.600" r="1.900" fill="#c2c2c2"/>
</svg>
<div class="t" id="doc-title" style="left:74px;top:84.500px;font-size:11.500px;font-weight:bold;color:#f2f2f2">Bubble Chart.ai* @ 26,67 % (RGB/Preview)</div>


<!-- ===== status bar ===== -->
<div style="left:615px;top:850px;width:385px;height:19px;background:#4a4a4a"></div>
<svg style="left:0;top:850px" width="1000" height="19" viewBox="0 850 1000 19">
<rect x="52" y="851" width="55.500" height="18" rx="2" fill="#404040"/><rect x="108.500" y="851" width="19" height="18" rx="2" fill="#464646"/>
<rect x="134.500" y="851" width="55.500" height="18" rx="2" fill="#404040"/><rect x="191" y="851" width="19" height="18" rx="2" fill="#464646"/>
<rect x="258" y="851" width="44" height="18" rx="2" fill="#404040"/><rect x="303" y="851" width="19.500" height="18" rx="2" fill="#464646"/>
<g fill="none" stroke="#dedede" stroke-width="1.300"><path d="M114.200 859l3.800 3.600 3.800-3.600"/><path d="M196.200 859l3.800 3.600 3.800-3.600"/><path d="M308.700 859l3.800 3.600 3.800-3.600"/></g>
<g fill="#6c6c6c"><path d="M221 856h1.600v9H221zM229.500 856v9l-6-4.500z"/><path d="M247 856v9l-6-4.500z"/><path d="M334 856v9l6-4.500z"/><path d="M351 856v9l6-4.500zM358.200 856h1.600v9h-1.600z"/></g>
<path d="M602.800 855.600v9l6-4.500z" fill="#e4e4e4"/>
<path d="M627 856l-4 4.200 4 4.200" fill="none" stroke="#8c8c8c" stroke-width="1.100"/>
<rect x="0" y="868" width="1440" height="1" fill="#3a3a3a"/>
</svg>
<div class="t" id="st-zoom" style="left:55.500px;top:856px;font-size:12.500px;color:#f0f0f0;-webkit-text-stroke:0.250px #f0f0f0">26,67%</div>
<div class="t" id="st-rot" style="left:137.500px;top:856px;font-size:12.500px;color:#f0f0f0;-webkit-text-stroke:0.250px #f0f0f0">0°</div>
<div class="t" id="st-page" style="left:262px;top:856px;font-size:12.500px;color:#f0f0f0;-webkit-text-stroke:0.250px #f0f0f0">1</div>
<div class="t" id="st-msg" style="left:420px;top:856px;font-size:12.500px;color:#d2d2d2;-webkit-text-stroke:0.200px #d2d2d2">Toggle Direct Selection</div>


<!-- ===== datylon panel ===== -->
<div id="pnl"></div><div id="pnl-tabs"></div><div id="pnl-tab1"></div><div id="pnl-tab2"></div><div id="pnl-body"></div><div id="pnl-gutter"></div>
<div style="left:1219px;top:88px;width:1px;height:30px;background:#3c3c3c"></div>
<div style="left:1104px;top:88px;width:1px;height:30px;background:#3c3c3c"></div>
<div style="left:1015px;top:168.500px;width:380px;height:1.500px;background:#d2d2d2"></div>
<div style="left:1269px;top:170px;width:126px;height:39px;background:#f1f5fe"></div>
<div style="left:1015px;top:209px;width:254px;height:1px;background:#dedede"></div>
<div style="left:1269px;top:207.600px;width:126px;height:1.600px;background:#0f52f5"></div>
<div style="left:1015px;top:248.600px;width:380px;height:2.600px;background:#d9d9d9"></div>
<div style="left:1015px;top:251.200px;width:380px;height:32.800px;background:#f6f6f6"></div>
<div style="left:1015px;top:284px;width:380px;height:1px;background:#e0e0e0"></div>
<div class="gbtn" style="left:1231px;top:133px;width:90.500px"></div>
<div class="gbtn" style="left:1331px;top:133px;width:48px"></div>
<div class="pbtn sel" style="left:1152px;top:293.6px"></div>
<div class="pbtn" style="left:1191.3px;top:293.6px"></div>
<div class="pbtn" style="left:1230.7px;top:293.6px"></div>
<div class="pbtn" style="left:1152px;top:334.2px"></div>
<div class="pbtn" style="left:1191.3px;top:334.2px"></div>
<div class="pbtn sel" style="left:1230.7px;top:334.2px"></div>
<div class="pbtn" style="left:1152px;top:756px"></div>
<div class="pbtn sel" style="left:1191.3px;top:756px"></div>
<div class="pbtn" style="left:1230.7px;top:756px"></div>
<div class="pin" style="top:365.6px"></div>
<div class="pin" style="top:397.1px"></div>
<div class="pin" style="top:428.5px"></div>
<div class="pin" style="top:460.2px"></div>
<div class="pin" style="top:491.6px"></div>
<div class="pin" style="top:649px"></div>
<div class="pin" style="top:724.4px"></div>
<div class="pin" style="top:813.4px"></div>
<div class="pin" style="top:566.800px"></div>
<div style="left:1359px;top:567.800px;width:23px;height:20px;background:#eeeeee;border-radius:0 3px 3px 0"></div>
<div style="left:1152px;top:598.300px;width:45px;height:22px;border:1px solid #a9a9a9;border-radius:4.500px;background:#fff"></div>
<div style="left:1154.300px;top:600.600px;width:40.400px;height:17.400px;border-radius:3px;background:#333"></div>
<div class="pin" style="left:1208px;width:141px;top:598.300px"></div>
<div class="gbtn" style="left:1354.700px;top:598.300px;width:33.300px"></div>
<div style="left:1152px;top:789.200px;width:13.500px;height:13.500px;background:#d9d9d9;border-radius:3.500px"></div>
<div style="left:1100.500px;top:540px;width:284px;height:1px;background:#e6e6e6"></div>
<div style="left:1101px;top:697.500px;width:247px;height:1px;background:#e6e6e6"></div>
<div style="left:1378.500px;top:833px;width:17px;height:17px;background:#484848"></div>
<div style="left:1001px;top:849.700px;width:394px;height:1.800px;background:#2b2b2b"></div>
<div style="left:1001px;top:851.500px;width:394px;height:7px;background:#484848"></div>
<div style="left:1001px;top:858.500px;width:394px;height:1.200px;background:#343434"></div>
<div style="left:1001px;top:859.700px;width:394px;height:9.300px;background:#4a4a4a"></div>
<div style="left:1001px;top:859.700px;width:25px;height:7.500px;background:#555;border-radius:0 0 7px 7px"></div>
<div style="left:1376px;top:859.700px;width:1px;height:9.300px;background:#3a3a3a"></div>
<div style="left:1377px;top:859.700px;width:18.500px;height:9.300px;background:#4f4f4f"></div>
<svg style="left:0;top:0" width="1440" height="869" viewBox="0 0 1440 869">
<path d="M1377.600 99.400l3 3.300-3 3.300M1382.800 99.400l3 3.300-3 3.300" fill="none" stroke="#c8c8c8" stroke-width="1.100"/>
<path d="M1031.500 136V151.500H1047.300" fill="none" stroke="#7d9bf7" stroke-width="1.200"/>
<rect x="1035.10" y="146.90" width="1.8" height="1.8" fill="#2455f2" opacity="1"/>
<rect x="1037.00" y="144.60" width="1.6" height="1.6" fill="#2455f2" opacity="1"/>
<rect x="1038.55" y="141.55" width="1.5" height="1.5" fill="#2455f2" opacity="1"/>
<rect x="1040.45" y="139.05" width="1.5" height="1.5" fill="#2455f2" opacity="1"/>
<rect x="1043.70" y="138.30" width="1.4" height="1.4" fill="#2455f2" opacity="1"/>
<rect x="1035.20" y="140.60" width="1.2" height="1.2" fill="#2455f2" opacity="0.6"/>
<rect x="1040.00" y="144.80" width="1" height="1" fill="#2455f2" opacity="0.4"/>
<rect x="1041.50" y="142.40" width="1" height="1" fill="#2455f2" opacity="0.4"/>
<rect x="1044.30" y="141.30" width="1" height="1" fill="#2455f2" opacity="0.4"/>
<path d="M1036.200 226.300l-5.400 5 5.400 5" fill="none" stroke="#111" stroke-width="2.300"/>
<path d="M1010.600 463.200l-4 4.300 4 4.300M1005.800 494.600l4 4.300-4 4.300" fill="none" stroke="#2b2b2b" stroke-width="1.100"/>
<path d="M1358.2 267.4c1.600-3.100 4.300-5 7.200-5s5.600 1.900 7.200 5c-1.600 3.100-4.300 5-7.200 5s-5.600-1.900-7.200-5z" fill="none" stroke="#222" stroke-width="1.250"/>
<circle cx="1365.4" cy="267.4" r="3.300" fill="none" stroke="#222" stroke-width="1.150"/><circle cx="1365.4" cy="267.4" r="1.400" fill="#111"/>
<path d="M1363.8 698.2c1.600-3.100 4.300-5 7.200-5s5.600 1.900 7.200 5c-1.600 3.100-4.300 5-7.200 5s-5.600-1.900-7.200-5z" fill="none" stroke="#222" stroke-width="1.250"/>
<circle cx="1371" cy="698.2" r="3.300" fill="none" stroke="#222" stroke-width="1.150"/><circle cx="1371" cy="698.2" r="1.400" fill="#111"/>
<g fill="none" stroke="#222" stroke-width="1"><circle cx="1163.800" cy="304.7" r="1.500"/><path d="M1165.300 304.7H1175.400M1170.600 299.9l4.800 4.800-4.800 4.800"/></g>
<g fill="none" stroke="#222" stroke-width="1"><circle cx="1208.200" cy="304.7" r="1.500"/><path d="M1202 304.7H1206.700M1209.700 304.7H1214.600M1206.800 299.9l-4.800 4.800 4.800 4.800M1209.800 299.9l4.800 4.800-4.800 4.800"/></g>
<g fill="none" stroke="#222" stroke-width="1"><circle cx="1252.500" cy="304.7" r="1.500"/><path d="M1251 304.7H1241.200M1246 299.9l-4.800 4.800 4.800 4.800"/></g>
<g fill="none" stroke="#222" stroke-width="1"><rect x="1167.500" y="338.700" width="2.800" height="2.800"/><path d="M1168.900 341.500V351.500M1164.100 346.700l4.800 4.800 4.800-4.800"/></g>
<g fill="none" stroke="#222" stroke-width="1"><circle cx="1208.200" cy="345.200" r="1.500"/><path d="M1208.200 338.800V343.700M1208.200 346.700V351.600M1203.400 343.600l4.800-4.800 4.800 4.800M1203.400 346.800l4.800 4.800 4.800-4.800"/></g>
<g fill="none" stroke="#222" stroke-width="1"><rect x="1246.200" y="348.700" width="2.800" height="2.800"/><path d="M1247.600 348.700V338.600M1242.800 343.400l4.800-4.800 4.800 4.800"/></g>
<path d="M1367.600 575.600h6.600l-3.300 4.200z" fill="#111"/>
<path d="M1376.31 606.91L1377.90 607.17L1377.90 609.43L1376.31 609.69L1375.82 610.86L1376.77 612.17L1375.17 613.77L1373.86 612.82L1372.69 613.31L1372.43 614.90L1370.17 614.90L1369.91 613.31L1368.74 612.82L1367.43 613.77L1365.83 612.17L1366.78 610.86L1366.29 609.69L1364.70 609.43L1364.70 607.17L1366.29 606.91L1366.78 605.74L1365.83 604.43L1367.43 602.83L1368.74 603.78L1369.91 603.29L1370.17 601.70L1372.43 601.70L1372.69 603.29L1373.86 603.78L1375.17 602.83L1376.77 604.43L1375.82 605.74Z" fill="none" stroke="#222" stroke-width="1.100" stroke-linejoin="round"/><circle cx="1371.3" cy="608.3" r="2.400" fill="none" stroke="#222" stroke-width="1.100"/>
<path d="M1164.00 762.50h9.6M1164.00 765.50h6.2M1164.00 768.50h9.6M1164.00 771.50h6.2" fill="none" stroke="#222" stroke-width="1"/>
<path d="M1203.40 762.50h9.6M1205.10 765.50h6.2M1203.40 768.50h9.6M1205.10 771.50h6.2" fill="none" stroke="#222" stroke-width="1"/>
<path d="M1242.80 762.50h9.6M1246.20 765.50h6.2M1242.80 768.50h9.6M1246.20 771.50h6.2" fill="none" stroke="#222" stroke-width="1"/>
<path d="M1187 854.200H1209" stroke="#2e2e2e" stroke-width="5" stroke-dasharray="1 1"/><path d="M1364.500 863.500l3-3" stroke="#9a9a9a" stroke-width="1"/>
</svg>
<div class="t" id="p-tab1" style="left:1011px;top:96.5px;font-size:11.5px;color:#f4f4f4;font-weight:bold">Datylon Editor</div>
<div class="t" id="p-tab2" style="left:1114px;top:96.5px;font-size:11.5px;color:#b4b4b4;font-weight:bold">Datylon Account</div>
<div class="t" id="p-el" style="left:1057.8px;top:136.8px;font-size:13px;color:#111;font-weight:bold">Element_1</div>
<div class="t" id="p-sel" style="left:1241px;top:136.8px;font-size:13px;color:#222;">Select chart</div>
<div class="t" id="p-help" style="left:1341.5px;top:136.8px;font-size:13px;color:#222;">Help</div>
<div class="t" id="p-bind" style="left:1057px;top:183.0px;font-size:13px;color:#222;">Binding</div>
<div class="t" id="p-fmt" style="left:1173.5px;top:183.0px;font-size:13px;color:#222;">Formatting</div>
<div class="t" id="p-sty" style="left:1312px;top:183.0px;font-size:13px;color:#0c4df2;font-weight:bold">Styling</div>
<div class="t" id="p-xaxis" style="left:1185px;top:222.0px;font-size:15px;color:#111;">X Axis</div>
<div class="t" id="p-labels" style="left:1028px;top:262.8px;font-size:9.5px;color:#2a2a2a;font-weight:bold;-webkit-text-stroke:0.300px #2a2a2a">LABELS</div>
<div class="t" id="p-ha1" style="left:1028px;top:295.3px;font-size:13px;color:#1c1c1c;">Horizontal</div>
<div class="t" id="p-ha2" style="left:1028px;top:310.2px;font-size:13px;color:#1c1c1c;">Alignment</div>
<div class="t" id="p-va" style="left:1028px;top:336.2px;font-size:13px;color:#1c1c1c;">Vertical Alignment</div>
<div class="t" id="p-ho" style="left:1028px;top:367.5px;font-size:13px;color:#1c1c1c;">Horizontal Offset</div>
<div class="t" id="p-vo" style="left:1028px;top:399.0px;font-size:13px;color:#1c1c1c;">Vertical Offset</div>
<div class="t" id="p-rot" style="left:1028px;top:430.5px;font-size:13px;color:#1c1c1c;">Rotation</div>
<div class="t" id="p-pre" style="left:1028px;top:462.0px;font-size:13px;color:#1c1c1c;">Prefix</div>
<div class="t" id="p-suf" style="left:1028px;top:493.4px;font-size:13px;color:#1c1c1c;">Suffix</div>
<div class="t" id="p-char" style="left:1028px;top:536.4px;font-size:9.5px;color:#2a2a2a;font-weight:bold;-webkit-text-stroke:0.300px #2a2a2a">CHARACTER</div>
<div class="t" id="p-tf" style="left:1028px;top:568.7px;font-size:13px;color:#1c1c1c;">Typeface</div>
<div class="t" id="p-col" style="left:1159.5px;top:625.0px;font-size:13px;color:#1c1c1c;">Color</div>
<div class="t" id="p-size" style="left:1266.5px;top:625.0px;font-size:13px;color:#1c1c1c;">Size</div>
<div class="t" id="p-tr" style="left:1028px;top:650.7px;font-size:13px;color:#1c1c1c;">Tracking</div>
<div class="t" id="p-para" style="left:1028px;top:693.0px;font-size:9.5px;color:#2a2a2a;font-weight:bold;-webkit-text-stroke:0.300px #2a2a2a">PARAGRAPH</div>
<div class="t" id="p-w" style="left:1028px;top:726.0px;font-size:13px;color:#1c1c1c;">Width</div>
<div class="t" id="p-hal" style="left:1028px;top:757.5px;font-size:13px;color:#1c1c1c;">Horizontal Align</div>
<div class="t" id="p-just" style="left:1028px;top:789.0px;font-size:13px;color:#1c1c1c;">Justify</div>
<div class="t" id="p-lead" style="left:1028px;top:815.0px;font-size:13px;color:#1c1c1c;">Leading</div>
<div class="t" id="v-ho" style="left:1158px;top:370.8px;font-size:13px;color:#1c1c1c;">5.0px</div>
<div class="t" id="v-vo" style="left:1158px;top:402.2px;font-size:13px;color:#1c1c1c;">0.0px</div>
<div class="t" id="v-rot" style="left:1158px;top:433.6px;font-size:13px;color:#1c1c1c;">0°</div>
<div class="t" id="v-pre" style="left:1158px;top:464.5px;font-size:13px;color:#1c1c1c;">$</div>
<div class="t" id="v-tf" style="left:1158px;top:571.8px;font-size:13px;color:#1c1c1c;">PT Sans Bold</div>
<div class="t" id="v-size" style="left:1214px;top:603.2px;font-size:13px;color:#1c1c1c;">30.0px</div>
<div class="t" id="v-tr" style="left:1158px;top:654.0px;font-size:13px;color:#1c1c1c;">0.0px</div>
<div class="t" id="v-w" style="left:1158px;top:729.4px;font-size:13px;color:#1c1c1c;">60.0px</div>
<div class="t" id="v-lead" style="left:1158px;top:818.4px;font-size:13px;color:#1c1c1c;">1.10</div>

<!-- ===== right dock ===== -->
<div style="left:1395px;top:75px;width:2.500px;height:794px;background:#383838"></div>
<svg style="left:0;top:0" width="1440" height="869" viewBox="0 0 1440 869">
<path d="M1427.600 79.400l-2.400 2.300 2.400 2.300M1431.800 79.400l-2.400 2.300 2.400 2.300" fill="none" stroke="#c8c8c8" stroke-width="1"/>
<path d="M1397.500 159.5H1440" stroke="#3d3d3d" stroke-width="1.400"/>
<path d="M1397.500 431.8H1440" stroke="#3d3d3d" stroke-width="1.400"/>
<path d="M1397.500 478H1440" stroke="#3d3d3d" stroke-width="1.400"/>
<path d="M1397.500 555.6H1440" stroke="#3d3d3d" stroke-width="1.400"/>
<path d="M1397.500 601.8H1440" stroke="#3d3d3d" stroke-width="1.400"/>
<path d="M1397.500 648H1440" stroke="#3d3d3d" stroke-width="1.400"/>
<path d="M1397.500 725H1440" stroke="#3d3d3d" stroke-width="1.400"/>
<path d="M1407 94.5H1430" stroke="#3e3e3e" stroke-width="4.400" stroke-dasharray="1 1"/>
<path d="M1407 165.4H1430" stroke="#3e3e3e" stroke-width="4.400" stroke-dasharray="1 1"/>
<path d="M1407 439H1430" stroke="#3e3e3e" stroke-width="4.400" stroke-dasharray="1 1"/>
<path d="M1407 485H1430" stroke="#3e3e3e" stroke-width="4.400" stroke-dasharray="1 1"/>
<path d="M1407 562.3H1430" stroke="#3e3e3e" stroke-width="4.400" stroke-dasharray="1 1"/>
<path d="M1407 608.5H1430" stroke="#3e3e3e" stroke-width="4.400" stroke-dasharray="1 1"/>
<path d="M1407 654.6H1430" stroke="#3e3e3e" stroke-width="4.400" stroke-dasharray="1 1"/>
<rect x="1402.700" y="102.300" width="30.600" height="24.700" rx="2.200" fill="#2c2c2c"/>
<path d="M1410.1999999999998 105.6H1417.1L1419.0 108H1429.0V123.4H1410.1999999999998Z" fill="#5c5c5c" stroke="#c6c6c6" stroke-width="1.100"/>
<path d="M1413.1999999999998 113.8H1414.8V111.3H1418.3999999999999V113.8H1420.8V111.3H1424.3999999999999V113.8H1426.0V120.2H1413.1999999999998Z" fill="#c6c6c6"/>
<path d="M1410.1999999999998 136.6H1417.1L1419.0 139H1429.0V154.4H1410.1999999999998Z" fill="#5c5c5c" stroke="#c6c6c6" stroke-width="1.100"/>
<path d="M1413.1999999999998 144.8H1414.8V142.3H1418.3999999999999V144.8H1420.8V142.3H1424.3999999999999V144.8H1426.0V151.2H1413.1999999999998Z" fill="#c6c6c6"/>
<path d="M1410.1999999999998 618.6H1417.1L1419.0 621H1429.0V636.4H1410.1999999999998Z" fill="#5c5c5c" stroke="#c6c6c6" stroke-width="1.100"/>
<path d="M1413.1999999999998 626.8H1414.8V624.3H1418.3999999999999V626.8H1420.8V624.3H1424.3999999999999V626.8H1426.0V633.2H1413.1999999999998Z" fill="#c6c6c6"/>
<path d="M1419.300 184.600l9.600 5.400-9.600 5.400-9.600-5.400z" fill="#c6c6c6"/>
<path d="M1411.800 195.200l7.500 4.200 7.500-4.200 2.100 1.300-9.600 5.600-9.600-5.600z" fill="#c6c6c6"/>
<path d="M1411 231.200l5.700-15.200h2.200l5.700 15.200h-2.200l-1.500-4.300h-6.200l-1.500 4.300zM1415.400 225h4.800l-2.400-6.800z" fill="#c6c6c6" stroke="#c6c6c6" stroke-width="0.500"/>
<path d="M1427.400 213.400V233.600" stroke="#c6c6c6" stroke-width="1.300"/>
<path d="M1417.600 248.700h8v16h-1.900v-14.200h-1.800v14.200h-1.900v-7.600h-2.400a4.200 4.200 0 0 1 0-8.400z" fill="#c6c6c6"/>
<path d="M1409.600 280.700H1429" stroke="#c6c6c6" stroke-width="1.200"/><path d="M1409.600 285.900H1429" stroke="#c6c6c6" stroke-width="2.200"/><path d="M1409.600 291.800H1429" stroke="#c6c6c6" stroke-width="3.400"/>
<path d="M1420.200 310.300c5.600 0 10 2.600 10 6.200 0 2.600-2.400 3.600-4.800 3.400-1.800-.2-3 .4-3 1.800 0 1.300.8 1.900.8 2.700 0 1-1.600 1.400-3.800 1.400-6 0-11-3.100-11-7.600 0-4.600 5.400-7.900 11.800-7.900z" fill="#c6c6c6"/>
<circle cx="1412.6" cy="319" r="1.6" fill="#535353"/>
<circle cx="1416.2" cy="322.4" r="1.5" fill="#535353"/>
<circle cx="1420.2" cy="322.8" r="1.3" fill="#535353"/>
<circle cx="1419" cy="314" r="1.5" fill="#535353"/>
<circle cx="1423.6" cy="313.8" r="1.4" fill="#535353"/>
<circle cx="1427" cy="316.4" r="1.4" fill="#535353"/>
<defs><linearGradient id="fan" x1="0" y1="0" x2="1" y2="1"><stop offset="0" stop-color="#1e1e1e"/><stop offset=".5" stop-color="#8a8a8a"/><stop offset="1" stop-color="#e6e6e6"/></linearGradient><linearGradient id="grd" x1="0" x2="1" y1="0" y2="0"><stop offset="0" stop-color="#1c1c1c"/><stop offset="1" stop-color="#ececec"/></linearGradient></defs>
<path d="M1411.400 358.400V341.200A17.200 17.200 0 0 1 1428.400 358.400Z" fill="url(#fan)" stroke="#c6c6c6" stroke-width="1.100"/>
<circle cx="1414.900" cy="378.700" r="6.600" fill="#b4b4b4"/><circle cx="1421" cy="385" r="6.400" fill="#767676" stroke="#bdbdbd" stroke-width="1"/>
<rect x="1409.600" y="407" width="18.600" height="12.400" fill="#c6c6c6"/>
<rect x="1411.0" y="408.4" width="4.400" height="3.900" fill="#535353"/>
<rect x="1411.0" y="413.6" width="4.400" height="3.900" fill="#8d8d8d"/>
<rect x="1416.8" y="408.4" width="4.400" height="3.900" fill="#8d8d8d"/>
<rect x="1416.8" y="413.6" width="4.400" height="3.900" fill="#535353"/>
<rect x="1422.6" y="408.4" width="4.400" height="3.900" fill="#535353"/>
<rect x="1422.6" y="413.6" width="4.400" height="3.900" fill="#8d8d8d"/>
<rect x="1411.200" y="451.600" width="16" height="15.600" fill="none" stroke="#c6c6c6" stroke-width="1.800" stroke-dasharray="3.200 2.200"/><path d="M1418 459.400h2.400M1419.200 458.200v2.400" stroke="#c6c6c6" stroke-width=".8"/>
<rect x="1410.700" y="496.800" width="10.400" height="10.400" fill="#c6c6c6"/><rect x="1416.500" y="502.600" width="11.500" height="11" fill="#c6c6c6" stroke="#535353" stroke-width="1"/><rect x="1417" y="503.100" width="4.100" height="4.100" fill="#8a8a8a"/>
<path d="M1411.300 526.800V547.500" stroke="#c6c6c6" stroke-width="1.200"/><rect x="1413.200" y="529.800" width="8.600" height="6.200" fill="#c6c6c6"/><rect x="1413.200" y="538.800" width="14.800" height="5.800" fill="#c6c6c6"/>
<rect x="1410.200" y="576.200" width="18" height="12.400" fill="url(#grd)" stroke="#c6c6c6" stroke-width="1.100"/>
<circle cx="1418.800" cy="675" r="6.800" fill="#c6c6c6"/><circle cx="1418.800" cy="675" r="9.400" fill="none" stroke="#a8a8a8" stroke-width="1.300" stroke-dasharray="2 1.700"/>
<rect x="1413.500" y="699.200" width="14.800" height="14.200" fill="#535353" stroke="#c6c6c6" stroke-width="1.200"/><rect x="1410.200" y="706.400" width="6.200" height="6.200" fill="#535353" stroke="#c6c6c6" stroke-width="1.100"/><rect x="1412.800" y="709.400" width="6.400" height="6.600" fill="#8a8a8a" stroke="#c6c6c6" stroke-width="1.100"/>
</svg>

</div>
</body>
</html>
